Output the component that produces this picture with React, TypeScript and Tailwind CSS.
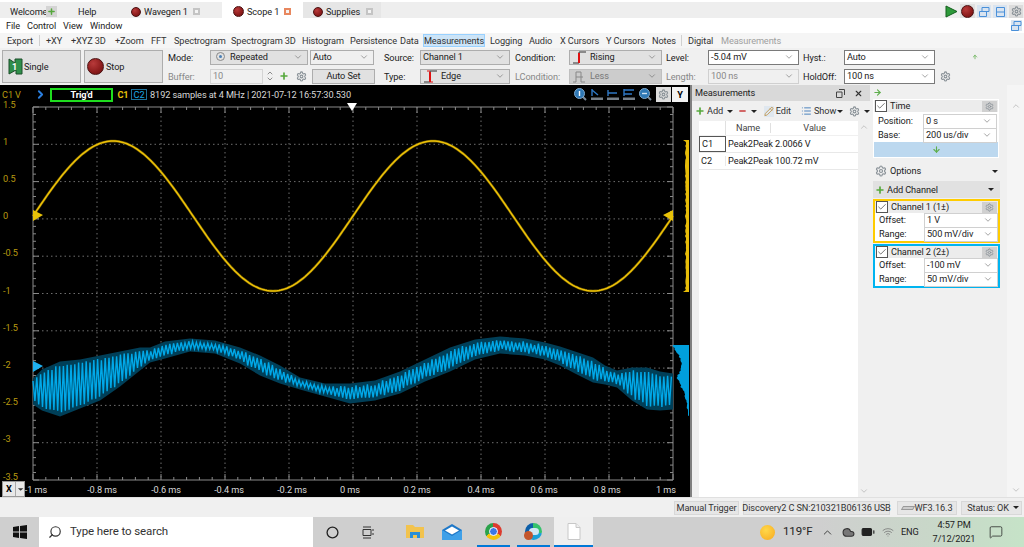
import React from 'react';
import {
  Settings, ChevronDown, ChevronUp, Search, X as CloseIcon, ArrowUp, ArrowDown, ArrowRight,
  Plus, Minus, Check, ChevronRight, Circle, Wifi, BatteryMedium, Cloud, MessageSquare, Pencil, List,
} from 'lucide-react';

const font = { fontFamily: 'Roboto, "Liberation Sans", sans-serif' };

// -------- small icons --------
function Ball({ size = 11 }: { size?: number }) {
  return (
    <span
      className="inline-block shrink-0 rounded-full border border-[#4a1010] bg-[radial-gradient(circle_at_35%_30%,#b83a3a,#8c1c1c_60%,#6a1010)]"
      style={{ width: size, height: size }}
    />
  );
}

function Gear({ size = 12 }: { size?: number }) {
  return <Settings size={size} strokeWidth={2.4} className="shrink-0 text-[#8a9298]" />;
}

function GreenPlus({ size = 11 }: { size?: number }) {
  return <Plus size={size} strokeWidth={4} className="shrink-0 text-[#56a83c]" />;
}

function TabClose({ active }: { active?: boolean }) {
  return (
    <span className={`flex h-[7px] w-[7px] shrink-0 items-center justify-center ${active ? 'bg-[#e8875e]' : 'bg-[#c4c4c4]'}`}>
      <span className="h-[3px] w-[3px] bg-[#f4f4f4]" />
    </span>
  );
}

function Tick() {
  return (
    <span className="flex h-[12px] w-[12px] shrink-0 items-center justify-center border border-[#555] bg-white">
      <Check size={10} strokeWidth={1.6} className="text-[#333]" />
    </span>
  );
}

function Caret({ className = '' }: { className?: string }) {
  return (
    <svg width="6" height="3" viewBox="0 0 6 3" className={`shrink-0 ${className}`}>
      <path d="M0 0h6L3 3z" fill="#222" />
    </svg>
  );
}

function Magnifier({ mark }: { mark: 'plus' | 'minus' }) {
  return (
    <svg width="13" height="13" viewBox="0 0 13 13" className="shrink-0">
      <path d="M8.5 8.5l3.5 3.5" stroke="#7a8a99" strokeWidth="2" />
      <circle cx="5.5" cy="5.5" r="5" fill="#2f78b5" stroke="#7fa8cc" />
      {mark === 'plus' ? <path d="M5.5 3v5" stroke="#fff" strokeWidth="1.4" /> : <path d="M3 5.5h5" stroke="#cfe2f2" strokeWidth="1.4" />}
    </svg>
  );
}

function AxisIcon({ kind }: { kind: 'arrow' | 'single' | 'double' }) {
  return (
    <svg width="12" height="11" viewBox="0 0 12 11" className="shrink-0">
      <path d="M0 8.5h12V11H0z" fill="#77808a" />
      {kind === 'arrow' && <path d="M1 0v7M1 1l6 5" stroke="#2f78c5" strokeWidth="1.4" fill="none" />}
      {kind === 'single' && <path d="M1 1v6M1 4h9" stroke="#2f78c5" strokeWidth="1.4" fill="none" />}
      {kind === 'double' && <path d="M1 0v7M1 1h10M1 5h8" stroke="#2f78c5" strokeWidth="1.4" fill="none" />}
    </svg>
  );
}

function Combo({ w, children, kind = 'gray', className = '' }: { w: number; children: React.ReactNode; kind?: 'gray' | 'white' | 'off' | 'offwhite'; className?: string }) {
  const skin = {
    gray: 'bg-[#e1e1e1] border-[#adadad] text-[#222]',
    white: 'bg-white border-[#7a7a7a] text-[#222]',
    off: 'bg-[#cccccc] border-[#bfbfbf] text-[#777]',
    offwhite: 'bg-[#f0f0f0] border-[#d0d0d0] text-[#888]',
  }[kind];
  return (
    <div className={`flex h-[15px] shrink-0 items-center justify-between border px-[2px] ${skin} ${className}`} style={{ width: w }}>
      <div className="flex items-center gap-[3px] whitespace-nowrap">{children}</div>
      <ChevronDown size={10} strokeWidth={1.4} className="mr-[2px] text-[#666]" />
    </div>
  );
}

function EdgeIcon({ kind }: { kind: 'rising' | 'edge' | 'less' }) {
  const col = kind === 'less' ? '#888' : '#333';
  return (
    <svg width="15" height="13" viewBox="0 0 15 13" className="shrink-0">
      {kind === 'less' ? (
        <path d="M1 12h3V2h5v10h4M4 7h7" stroke={col} fill="none" />
      ) : (
        <>
          <path d="M1 12h6V1h7" stroke={col} fill="none" />
          <path d="M7 2v10" stroke="#e01010" strokeWidth="2" />
          {kind === 'edge' && <path d="M4 1h3M7 12h3" stroke="#e01010" />}
        </>
      )}
    </svg>
  );
}

// -------- plot --------
const PLOT_LEFT = 33;
const PLOT_W = 640;
const TOP = 4; // first grid line in svg coords (y=107 on page)
const BOTTOM = 377;
const yLabels = ['1.5', '1', '0.5', '0', '-0.5', '-1', '-1.5', '-2', '-2.5', '-3', '-3.5'];
const xLabels: [string, number][] = [
  ['-1 ms', 36], ['-0.8 ms', 102], ['-0.6 ms', 166], ['-0.4 ms', 229], ['-0.2 ms', 292], ['0 ms', 350],
  ['0.2 ms', 417], ['0.4 ms', 481], ['0.6 ms', 544], ['0.8 ms', 607], ['1 ms', 666],
];

// envelope of the noisy channel, page coords [x, top, bottom]
const env: [number, number, number][] = [
  [33, 381, 402], [42, 372, 408], [60, 364, 414], [80, 362, 406], [100, 358, 398], [120, 354, 384], [140, 350, 368],
  [150, 350, 360], [165, 344, 356], [190, 341, 349], [215, 343, 351], [240, 350, 361], [260, 358, 373], [280, 368, 381],
  [300, 380, 387], [325, 386, 394], [350, 386, 401], [375, 383, 398], [400, 374, 391], [425, 362, 379], [450, 350, 369],
  [475, 342, 357], [500, 339, 351], [525, 341, 353], [545, 345, 357], [560, 349, 363], [575, 354, 371], [593, 360, 380],
  [605, 368, 382], [617, 373, 385], [632, 370, 398], [647, 370, 407], [660, 374, 408], [673, 376, 407],
];

function envAt(x: number) {
  for (let i = 0; i < env.length - 1; i++) {
    const [x0, t0, b0] = env[i];
    const [x1, t1, b1] = env[i + 1];
    if (x >= x0 && x <= x1) {
      const k = (x - x0) / (x1 - x0);
      return [t0 + (t1 - t0) * k, b0 + (b1 - b0) * k];
    }
  }
  return [376, 407];
}

function noise(i: number) {
  const v = Math.sin(i * 12.9898) * 43758.5453;
  return v - Math.floor(v);
}

// blue histogram width at page y
const histProfile: [number, number][] = [[345, 16], [350, 14], [356, 10], [363, 8], [370, 8], [377, 12], [383, 10], [390, 6], [403, 2], [416, 1]];

function histAt(y: number) {
  for (let i = 0; i < histProfile.length - 1; i++) {
    const [y0, w0] = histProfile[i];
    const [y1, w1] = histProfile[i + 1];
    if (y >= y0 && y <= y1) return w0 + ((w1 - w0) * (y - y0)) / (y1 - y0);
  }
  return 1;
}

function buildPlot() {
  let yellow = '';
  for (let x = PLOT_LEFT; x <= PLOT_LEFT + PLOT_W; x += 2) {
    const y = 216 - 75 * Math.sin((2 * Math.PI * (x - PLOT_LEFT)) / 320) - 103;
    yellow += `${x === PLOT_LEFT ? 'M' : 'L'}${x} ${y.toFixed(1)} `;
  }
  // stripes: each sample runs nearly straight up or down between the envelope edges
  let zig = '';
  let i = 0;
  for (let x = PLOT_LEFT; x <= PLOT_LEFT + PLOT_W; x += 1.9) {
    const [t, b] = envAt(x);
    const j = noise(i) * Math.min(2.5, (b - t) * 0.2);
    const y = (i % 2 === 0 ? t + j : b - j) - 103;
    zig += `${i === 0 ? 'M' : 'L'}${x.toFixed(1)} ${y.toFixed(1)} `;
    i++;
  }
  const top = env.map(([x, t]) => `${x} ${t - 2.5 - 103}`);
  const bot = [...env].reverse().map(([x, , b]) => `${x} ${b + 2.5 - 103}`);
  const halo = `M${top.join(' L')} L${bot.join(' L')} Z`;

  // histograms hugging the right edge
  let hist = 'M689 242 ';
  for (let y = 345; y <= 416; y += 1.5) {
    const w = Math.max(1, histAt(y) + (noise(y) - 0.5) * 2);
    hist += `L${(689 - w).toFixed(1)} ${y - 103} `;
  }
  hist += 'L689 313 Z';
  let yhist = 'M689 37 L683 37 ';
  for (let y = 39; y <= 188; y += 2) {
    yhist += `L${(685 + noise(y) * 1.2).toFixed(1)} ${y} `;
  }
  yhist += 'L683 189 L689 189 Z';
  return { yellow, zig, halo, hist, yhist };
}

function Plot() {
  const { yellow, zig, halo, hist, yhist } = buildPlot();
  const gridX = Array.from({ length: 11 }, (_, k) => PLOT_LEFT + k * 64);
  const gridY = Array.from({ length: 11 }, (_, k) => TOP + k * 37.3);
  const minorX = Array.from({ length: 51 }, (_, k) => PLOT_LEFT + k * 12.8);
  const minorY = Array.from({ length: 51 }, (_, k) => TOP + k * 7.46);
  return (
    <svg width="690" height="394" viewBox="0 0 690 394" className="block overflow-visible" style={{ fontFamily: font.fontFamily }}>
      {gridX.slice(1, 10).map((x) => (
        <line key={x} x1={x} x2={x} y1={TOP} y2={BOTTOM} stroke="#6e6e6e" strokeWidth="1" strokeDasharray="1.5 3" />
      ))}
      {gridY.slice(1, 10).map((y) => (
        <line key={y} x1={PLOT_LEFT} x2={PLOT_LEFT + PLOT_W} y1={y} y2={y} stroke="#6e6e6e" strokeWidth="1" strokeDasharray="1.5 3" />
      ))}
      <path d={`M${PLOT_LEFT} ${TOP}V${BOTTOM}H${PLOT_LEFT + PLOT_W}V${TOP}H${PLOT_LEFT}`} stroke="#8a8a8a" fill="none" />
      {minorX.map((x, k) => (
        <g key={k} stroke="#8a8a8a">
          <line x1={x} x2={x} y1={TOP} y2={TOP + (k % 5 === 0 ? 6 : 3)} />
          <line x1={x} x2={x} y1={BOTTOM} y2={BOTTOM - (k % 5 === 0 ? 6 : 3)} />
        </g>
      ))}
      {minorY.map((y, k) => (
        <g key={k} stroke="#8a8a8a">
          <line x1={PLOT_LEFT} x2={PLOT_LEFT + (k % 5 === 0 ? 6 : 3)} y1={y} y2={y} />
          <line x1={PLOT_LEFT + PLOT_W} x2={PLOT_LEFT + PLOT_W - (k % 5 === 0 ? 6 : 3)} y1={y} y2={y} />
        </g>
      ))}
      <path d={halo} fill="#003f58" />
      <path d={zig} fill="none" stroke="#00a8e8" strokeWidth="1.4" />
      <path d={yellow} fill="none" stroke="#6a5600" strokeWidth="2.6" />
      <path d={yellow} fill="none" stroke="#eec208" strokeWidth="1.5" />
      <path d={hist} fill="#009fdc" />
      <path d={yhist} fill="#e8bd08" />
      <path d="M33 107l10 5-10 6z M673 107l-10 5 10 6z" fill="#e8c208" />
      <path d="M33 258l10 5-10 6z" fill="#1fb0f0" />
      <path d="M347 0h10l-5 8z" fill="#fff" />
      {yLabels.map((t, k) => (
        <text key={t} x="3" y={4.5 + k * 37.2} fill="#b89a10" fontSize="9.2" letterSpacing="-0.1">
          {t}
        </text>
      ))}
      {xLabels.map(([t, x]) => (
        <text key={t} x={x} y="390" textAnchor="middle" fill="#d8d8d8" fontSize="9.2" letterSpacing="-0.1">
          {t}
        </text>
      ))}
    </svg>
  );
}

// -------- rows --------
function StackIcon() {
  return (
    <svg width="11" height="10" viewBox="0 0 11 10" fill="none" stroke="#4a90d9">
      <path d="M3 .5h7v4H3zM.5 4.5h7v5h-7z" fill="#d9e4f0" />
    </svg>
  );
}

function TopTabs() {
  return (
    <div className="flex h-[16px] items-center whitespace-nowrap bg-[#eeeeee] pt-[3px]">
      <span className="ml-[10px] w-[36px]">Welcome</span>
      <span className="flex h-[11px] w-[11px] items-center justify-center bg-[#d4d4d4]"><GreenPlus size={9} /></span>
      <span className="ml-[21px] w-[36px]">Help</span>
      <div className="ml-[17px] flex w-[91px] items-center gap-[3px] pl-0">
        <Ball size={10} />
        <span className="w-[46px]">Wavegen 1</span>
        <TabClose />
      </div>
      <div className="-mt-[3px] flex h-[16px] w-[81px] items-center gap-[3px] bg-white pl-[11px] pt-[3px]">
        <Ball size={11} />
        <span className="w-[34px]">Scope 1</span>
        <TabClose active />
      </div>
      <div className="-mt-[3px] flex h-[16px] w-[78px] items-center gap-[3px] bg-[#e6e6e6] pl-[10px] pt-[3px]">
        <Ball size={10} />
        <span className="w-[37px]">Supplies</span>
        <TabClose />
      </div>
      <div className="ml-auto flex items-center gap-[2px] pr-[1px]">
        <svg width="13" height="13" viewBox="0 0 13 13"><path d="M1 1l11 5.5L1 12z" fill="#2e9a3a" stroke="#14601e" /></svg>
        <span className="flex h-[15px] w-[15px] items-center justify-center bg-[#e0e0e0]"><Ball size={13} /></span>
        <span className="flex h-[14px] w-[14px] items-center justify-center bg-[#d9e4f0]"><StackIcon /></span>
        <span className="flex h-[14px] w-[14px] items-center justify-center bg-[#d9e4f0]">
          <svg width="9" height="10" viewBox="0 0 9 10" fill="none" stroke="#4a90d9"><path d="M.5.5h8v9h-8zM.5 5h8" /></svg>
        </span>
        <span className="flex h-[14px] w-[14px] items-center justify-center bg-[#dcdcdc]"><Gear size={11} /></span>
      </div>
    </div>
  );
}

function MenuRow() {
  return (
    <div className="flex h-[15px] items-center bg-white pl-[6px]">
      <span className="w-[21px]">File</span>
      <span className="w-[36px]">Control</span>
      <span className="w-[27px]">View</span>
      <span>Window</span>
      <span className="ml-auto mr-[2px] flex h-[11px] w-[11px] items-center justify-center bg-[#d9e4f0]"><StackIcon /></span>
    </div>
  );
}

const tools: [string, number][] = [
  ['+XY', 25], ['+XYZ 3D', 44], ['+Zoom', 36], ['FFT', 23], ['Spectrogram', 57], ['Spectrogram 3D', 71], ['Histogram', 48], ['Persistence', 50], ['Data', 23],
];
const tools2: [string, number][] = [['Logging', 39], ['Audio', 31], ['X Cursors', 46], ['Y Cursors', 46], ['Notes', 29]];

function ToolRow() {
  return (
    <div className="flex h-[15px] items-center bg-[#f5f5f5] pl-[7px] text-[#333]">
      <span className="w-[32px]">Export</span>
      <span className="mr-[6px] h-[11px] w-px bg-[#d0d0d0]" />
      {tools.map(([t, w]) => (
        <span key={t} className="whitespace-nowrap" style={{ width: w }}>{t}</span>
      ))}
      <span className="mr-[5px] flex h-[13px] w-[62px] items-center justify-center border border-[#99d1ff] bg-[#cce4f7]">Measurements</span>
      {tools2.map(([t, w]) => (
        <span key={t} className="whitespace-nowrap" style={{ width: w }}>{t}</span>
      ))}
      <span className="mr-[6px] h-[11px] w-px bg-[#d0d0d0]" />
      <span className="w-[33px]">Digital</span>
      <span className="text-[#a0a0a0]">Measurements</span>
    </div>
  );
}

function ControlPanel() {
  return (
    <div className="flex h-[37px] items-center bg-[#f0f0f0] pl-[2px]">
      <div className="flex h-[33px] w-[79px] items-center gap-[1px] border border-[#adadad] bg-[#e1e1e1] pl-[5px]">
        <svg width="15" height="17" viewBox="0 0 15 17">
          <path d="M1 1l6 4V1h1v0l6 0v15H8v-4l-7 4z" fill="#2f8f4a" stroke="#1c4f2a" />
          <text x="4" y="12" fontSize="9" fill="#fff" fontWeight="700">1</text>
        </svg>
        <span>Single</span>
      </div>
      <div className="ml-[3px] flex h-[33px] w-[79px] items-center gap-[2px] border border-[#adadad] bg-[#e1e1e1] pl-[2px]">
        <Ball size={17} />
        <span>Stop</span>
      </div>
      <div className="ml-[5px] flex w-[42px] flex-col gap-[4px]">
        <span className="h-[15px] leading-[15px]">Mode:</span>
        <span className="h-[15px] leading-[15px] text-[#888]">Buffer:</span>
      </div>
      <div className="flex w-[169px] flex-col gap-[4px]">
        <div className="flex gap-[2px]">
          <Combo w={98}>
            <span className="ml-[3px] flex h-[9px] w-[9px] items-center justify-center rounded-full border border-[#888]"><span className="h-[3px] w-[3px] rounded-full bg-[#4a7fb5]" /></span>
            <span className="ml-[2px]">Repeated</span>
          </Combo>
          <Combo w={64} kind="gray" className="bg-[#f0f0f0]">Auto</Combo>
        </div>
        <div className="flex items-center">
          <div className="flex h-[15px] w-[53px] items-center border border-[#d4d4d4] bg-[#f0f0f0] pl-[2px] text-[#888]">10</div>
          <div className="ml-[2px] flex w-[10px] flex-col items-center text-[#777]">
            <ChevronUp size={8} strokeWidth={2.5} className="-mb-[2px]" />
            <ChevronDown size={8} strokeWidth={2.5} />
          </div>
          <span className="ml-[4px]"><GreenPlus size={10} /></span>
          <span className="ml-[7px]"><Gear size={11} /></span>
          <div className="ml-[5px] flex h-[15px] w-[63px] items-center justify-center border border-[#adadad] bg-[#e1e1e1]">Auto Set</div>
        </div>
      </div>
      <div className="ml-[5px] flex w-[36px] flex-col gap-[4px]">
        <span className="h-[15px] leading-[15px]">Source:</span>
        <span className="h-[15px] leading-[15px]">Type:</span>
      </div>
      <div className="flex w-[95px] flex-col gap-[4px]">
        <Combo w={90}>Channel 1</Combo>
        <Combo w={90}><EdgeIcon kind="edge" />Edge</Combo>
      </div>
      <div className="flex w-[54px] flex-col gap-[4px]">
        <span className="h-[15px] leading-[15px]">Condition:</span>
        <span className="h-[15px] leading-[15px] text-[#888]">LCondition:</span>
      </div>
      <div className="flex w-[97px] flex-col gap-[4px]">
        <Combo w={93}><EdgeIcon kind="rising" />Rising</Combo>
        <Combo w={93} kind="off"><EdgeIcon kind="less" />Less</Combo>
      </div>
      <div className="flex w-[42px] flex-col gap-[4px]">
        <span className="h-[15px] leading-[15px]">Level:</span>
        <span className="h-[15px] leading-[15px] text-[#888]">Length:</span>
      </div>
      <div className="flex w-[95px] flex-col gap-[4px]">
        <Combo w={91} kind="white">-5.04 mV</Combo>
        <Combo w={91} kind="offwhite">100 ns</Combo>
      </div>
      <div className="flex w-[41px] flex-col gap-[4px]">
        <span className="h-[15px] leading-[15px]">Hyst.:</span>
        <span className="h-[15px] leading-[15px]">HoldOff:</span>
      </div>
      <div className="flex w-[134px] flex-col gap-[4px]">
        <div className="flex items-center">
          <Combo w={91} kind="white">Auto</Combo>
          <ArrowUp size={10} strokeWidth={3} className="ml-[37px] text-[#5fae4c]" />
        </div>
        <div className="flex items-center gap-[5px]">
          <Combo w={91} kind="white">100 ns</Combo>
          <Gear size={11} />
        </div>
      </div>
    </div>
  );
}

function ScopeHeader() {
  return (
    <div className="flex h-[18px] items-center bg-black pt-[1px] text-[#d8d8d8]">
      <span className="ml-[2px] w-[34px] text-[#b89a10]">C1 V</span>
      <ChevronRight size={13} strokeWidth={3.5} className="-ml-[2px] mr-[3px] text-[#2a7fe0]" />
      <div className="flex h-[14px] w-[63px] items-center justify-center border-2 border-[#1edc1e] font-bold text-white">Trig'd</div>
      <span className="ml-[2px] w-[16px] text-center font-bold text-[#e8c208]">C1</span>
      <span className="w-[16px] border border-[#1d6f99] text-center text-[#18a8e8]">C2</span>
      <span className="ml-[3px] w-[424px] whitespace-nowrap">8192 samples at 4 MHz | 2021-07-12 16:57:30.530</span>
      <div className="flex items-center gap-[4px]">
        <Magnifier mark="plus" />
        <AxisIcon kind="arrow" />
        <AxisIcon kind="single" />
        <AxisIcon kind="double" />
        <Magnifier mark="minus" />
      </div>
      <span className="ml-[4px] flex h-[15px] w-[15px] items-center justify-center bg-[#dddddd]"><Gear size={11} /></span>
      <span className="ml-[1px] flex h-[15px] w-[16px] items-center justify-center bg-[#f2f2f2] font-bold text-black">Y</span>
    </div>
  );
}

function Scope() {
  return (
    <div className="relative flex w-[692px] flex-col border-r-2 border-[#808080] bg-black">
      <ScopeHeader />
      <Plot />
      <div className="absolute bottom-0 left-[2px] flex h-[16px] w-[23px] items-center border border-[#999] bg-[#e8e8e8] font-bold text-black">
        <span className="w-[13px] text-center">X</span>
        <span className="h-full w-px bg-[#aaa]" />
        <svg width="8" height="5" viewBox="0 0 8 5" className="ml-px"><path d="M1 1h6L4 4z" fill="#333" /></svg>
      </div>
    </div>
  );
}

function Measurements() {
  return (
    <div className="flex w-[178px] flex-col bg-white">
      <div className="flex h-[16px] items-center justify-between bg-[#d9d9d9] pl-[3px] pr-[7px]">
        <span>Measurements</span>
        <div className="flex items-center gap-[9px] text-[#333]">
          <svg width="9" height="9" viewBox="0 0 9 9" fill="none" stroke="#444"><path d="M3 .5h5.5V6M.5 3h5.5v5.5H.5z" /></svg>
          <CloseIcon size={9} strokeWidth={3} />
        </div>
      </div>
      <div className="flex h-[20px] items-center gap-[2px] bg-[#f0f0f0] pl-[3px] text-[#333]">
        <GreenPlus size={10} /><span className="w-[20px]">Add</span>
        <Caret />
        <Minus size={10} strokeWidth={4} className="ml-[3px] text-[#c83a3a]" />
        <Caret className="ml-[2px]" />
        <Pencil size={11} className="ml-[5px] bg-[#dfe7ef] text-[#c09040]" /><span className="w-[25px]">Edit</span>
        <List size={12} className="ml-[1px] text-[#3a78b8]" /><span className="w-[21px]">Show</span>
        <Caret />
        <span className="ml-[4px]"><Gear size={11} /></span>
        <Caret className="ml-[2px]" />
      </div>
      <div className="flex min-h-0 flex-1">
        <div className="w-[7px] bg-[#f0f0f0]" />
        <div className="flex flex-1 flex-col">
          <div className="flex h-[15px] items-center border-b border-[#f0f0f0] text-[#444]">
            <span className="h-full w-[27px] border-r border-[#e0e0e0]" />
            <span className="w-[45px] border-r border-[#e0e0e0] text-center">Name</span>
            <span className="w-[87px] text-center">Value</span>
          </div>
          <div className="flex h-[17px] items-center border-b border-[#e8e8e8]">
            <span className="flex h-[16px] w-[27px] items-center border border-[#555] pl-[2px]">C1</span>
            <span className="w-[45px] whitespace-nowrap border-r border-[#e8e8e8] pl-[2px]">Peak2Peak</span>
            <span className="w-[87px] pl-[4px]">2.0066 V</span>
          </div>
          <div className="flex h-[17px] items-center border-b border-[#e8e8e8]">
            <span className="w-[27px] border-r border-[#e8e8e8] pl-[2px]">C2</span>
            <span className="w-[45px] whitespace-nowrap border-r border-[#e8e8e8] pl-[2px]">Peak2Peak</span>
            <span className="w-[87px] pl-[4px]">100.72 mV</span>
          </div>
        </div>
        <div className="flex w-[12px] flex-col items-center justify-between bg-[#f0f0f0] py-[1px] text-[#bbb]">
          <ChevronUp size={10} />
          <ChevronDown size={10} />
        </div>
      </div>
    </div>
  );
}

function Field({ label, value }: { label: string; value: string }) {
  return (
    <div className="flex h-[14px] items-center">
      <span className="w-[49px] pl-[4px]">{label}</span>
      <Combo w={74} kind="white" className="h-[14px] border-[#d0d0d0]">{value}</Combo>
    </div>
  );
}

function Head({ label }: { label: string }) {
  return (
    <div className="flex h-[12px] items-center bg-[#ececec] pl-[1px] pr-[1px]">
      <Tick />
      <span className="ml-[3px]">{label}</span>
      <span className="ml-auto flex h-[11px] w-[15px] items-center justify-center bg-[#d0d0d0]"><Gear size={9} /></span>
    </div>
  );
}

function Sidebar() {
  return (
    <div className="flex min-w-0 flex-1 bg-[#f0f0f0]">
      <div className="flex w-[134px] flex-col pl-[3px]">
        <div className="flex h-[14px] items-center"><ArrowRight size={9} strokeWidth={3} className="text-[#5fae4c]" /></div>
        <div className="w-[126px] bg-white p-[1px]">
          <div className="h-[14px]"><Head label="Time" /></div>
          <Field label="Position:" value="0 s" />
          <Field label="Base:" value="200 us/div" />
          <div className="flex h-[15px] items-center justify-center bg-[#bcd8ef]"><ArrowDown size={9} strokeWidth={3} className="text-[#5fae4c]" /></div>
        </div>
        <div className="mt-[6px] flex h-[14px] items-center pl-[2px] pr-[6px]">
          <Gear size={12} />
          <span className="ml-[3px]">Options</span>
          <Caret className="ml-auto" />
        </div>
        <div className="mt-[3px] flex h-[17px] w-[127px] items-center bg-[#e1e1e1] pl-[2px] pr-[6px]">
          <GreenPlus size={10} />
          <span className="ml-[2px]">Add Channel</span>
          <Caret className="ml-auto" />
        </div>
        <div className="mt-[1px] w-[127px] border-2 border-[#ffcc00] bg-white">
          <Head label="Channel 1 (1±)" />
          <Field label="Offset:" value="1 V" />
          <Field label="Range:" value="500 mV/div" />
        </div>
        <div className="mt-[1px] w-[127px] border-2 border-[#00b4f0] bg-white">
          <Head label="Channel 2 (2±)" />
          <Field label="Offset:" value="-100 mV" />
          <Field label="Range:" value="50 mV/div" />
        </div>
      </div>
      <div className="ml-auto flex w-[17px] flex-col items-center justify-between bg-[#f5f5f5] pb-[2px] pt-[16px] text-[#bbb]">
        <ChevronUp size={10} />
        <ChevronDown size={10} />
      </div>
    </div>
  );
}

function StatusBar() {
  return (
    <div className="flex h-[20px] items-center justify-end gap-[4px] whitespace-nowrap border-t border-[#e0e0e0] bg-[#f0f0f0] pr-[2px] text-[#333]">
      <span className="flex h-[14px] w-[65px] items-center justify-center border border-[#d8d8d8] bg-[#e6e6e6]">Manual Trigger</span>
      <span className="flex h-[14px] w-[147px] items-center justify-center border border-[#d8d8d8] bg-[#e6e6e6]">Discovery2 C SN:210321B06136 USB</span>
      <span className="ml-[3px] flex h-[14px] w-[60px] items-center justify-center gap-[1px] border border-[#d8d8d8] bg-[#e6e6e6]">
        <span className="h-[4px] w-[12px] -skew-x-[30deg] border border-[#999] bg-[#ccc]" />WF3.16.3
      </span>
      <span className="flex h-[14px] w-[61px] items-center justify-end gap-[4px] border border-[#d8d8d8] bg-[#e6e6e6] pr-[2px]">
        Status: OK
        <Caret />
      </span>
    </div>
  );
}

function Taskbar() {
  return (
    <div className="flex h-[30px] items-center bg-[linear-gradient(90deg,#cfcfcf_0%,#cfcfcf_80%,#c8d8c8_92%,#c6e3c8_100%)] text-[#222]">
      <div className="flex w-[39px] justify-center">
        <svg width="14" height="14" viewBox="0 0 14 14" fill="#111">
          <path d="M0 2l6-1v5.5H0zM7 .9L14 0v6.5H7zM0 7.5h6V13l-6-1zM7 7.5h7V14l-7-1z" />
        </svg>
      </div>
      <div className="flex h-[30px] w-[274px] items-center gap-[8px] bg-white pl-[9px] text-[11.5px] text-[#333]">
        <Search size={14} className="-scale-x-100 text-[#333]" />
        <span>Type here to search</span>
      </div>
      <div className="flex w-[39px] justify-center"><Circle size={13} strokeWidth={2.4} className="text-[#222]" /></div>
      <div className="flex w-[31px] justify-center">
        <svg width="13" height="13" viewBox="0 0 13 13" fill="none" stroke="#333"><path d="M2 3.5h8v6H2zM2 1h8M2 12h8M12 3v2M12 7v2" /></svg>
      </div>
      <div className="ml-[17px] flex w-[30px] justify-center">
        <svg width="18" height="16" viewBox="0 0 18 16"><path d="M0 1h7l2 2h9v11H0z" fill="#f2c34e" /><path d="M4 8h10v6H4z" fill="#2a8fd8" /><path d="M7 11h4v3H7z" fill="#f2c34e" /></svg>
      </div>
      <div className="ml-[7px] flex w-[30px] justify-center">
        <svg width="20" height="16" viewBox="0 0 20 16"><path d="M0 6l10-6 10 6v10H0z" fill="#1e78c8" /><path d="M0 6l10 6 10-6v10H0z" fill="#3fa0e8" /><path d="M3 6.5L10 2.5l7 4-7 4z" fill="#fff" /></svg>
      </div>
      <div className="ml-[10px] flex h-full w-[33px] items-center justify-center border-b-2 border-[#0078d7]">
        <span className="h-[17px] w-[17px] rounded-full bg-[conic-gradient(#dc3b2e_0deg_120deg,#f4c20d_120deg_240deg,#2aa24a_240deg_360deg)] p-[4px]"><span className="block h-full w-full rounded-full border border-white bg-[#3b78e7]" /></span>
      </div>
      <div className="ml-[7px] flex h-full w-[33px] items-center justify-center border-b-2 border-[#0078d7]">
        <span className="relative h-[17px] w-[17px] rounded-full bg-[conic-gradient(#35c26c_0deg_100deg,#1aa0d8_100deg_250deg,#0c5ea8_250deg_360deg)]">
          <span className="absolute left-[4px] top-[5px] h-[7px] w-[10px] rounded-full bg-[#cfe8f5]" />
          <span className="absolute bottom-0 left-[-1px] h-[9px] w-[9px] rounded-full bg-[#c4562c]" />
        </span>
      </div>
      <div className="ml-[4px] flex h-full w-[39px] items-center justify-center border-b-2 border-[#0078d7] bg-[#efefef]">
        <svg width="14" height="17" viewBox="0 0 14 17"><path d="M1 .5h8l4 4v12H1z" fill="#fff" stroke="#c8c8c8" /><path d="M9 .5v4h4" fill="#eee" stroke="#c8c8c8" /></svg>
      </div>
      <div className="ml-[167px] flex items-center">
        <span className="h-[15px] w-[15px] rounded-full bg-[radial-gradient(circle_at_40%_35%,#ffd84a,#f7a81e)]" />
        <span className="ml-[8px] w-[38px] text-[11.5px]">119°F</span>
        <ChevronUp size={13} strokeWidth={1.5} />
        <Cloud size={13} className="ml-[8px] text-[#333]" fill="#777" />
        <BatteryMedium size={14} className="ml-[6px] text-[#222]" fill="#222" />
        <Wifi size={12} strokeWidth={1.6} className="ml-[7px] text-[#777]" />
        <span className="ml-[7px] w-[30px]">ENG</span>
      </div>
      <div className="flex w-[46px] flex-col items-center leading-[14px]">
        <span>4:57 PM</span>
        <span>7/12/2021</span>
      </div>
      <div className="ml-[12px] flex justify-center"><MessageSquare size={14} strokeWidth={1.3} className="text-[#222]" /></div>
    </div>
  );
}

export default function App() {
  return (
    <div className="flex h-[547px] w-[1024px] flex-col overflow-hidden bg-white text-[9.2px] leading-none tracking-[-0.1px] text-[#222]" style={font}>
      <div className="h-[2px] shrink-0 bg-white" />
      <TopTabs />
      <MenuRow />
      <ToolRow />
      <ControlPanel />
      <div className="flex h-[412px] shrink-0">
        <Scope />
        <Measurements />
        <Sidebar />
      </div>
      <StatusBar />
      <Taskbar />
    </div>
  );
}
